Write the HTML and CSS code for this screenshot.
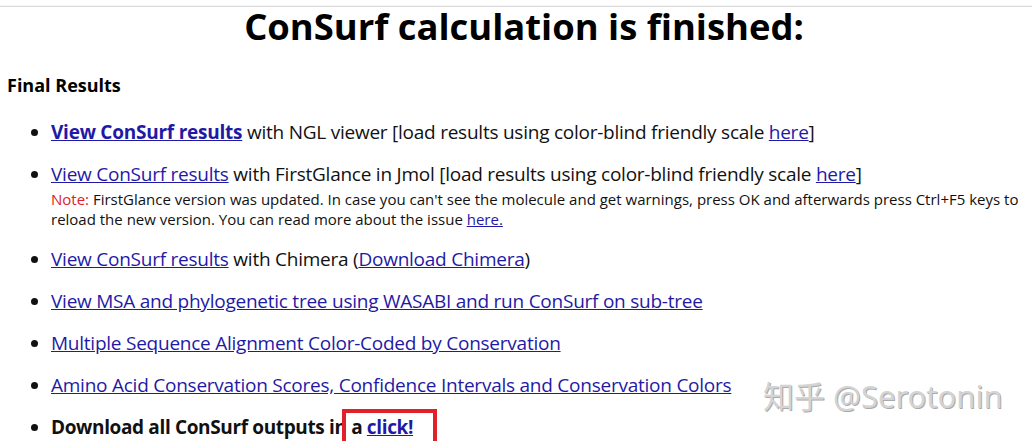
FILE: index.html
```html
<!DOCTYPE html>
<html>
<head>
<meta charset="utf-8">
<link rel="stylesheet" href="styles.css">
</head>
<body>
<div class="topline"></div>
<h1 class="title">ConSurf calculation is finished:</h1>
<h4 class="section">Final Results</h4>
<ul class="results">
  <li><a href="#" class="strong-link">View ConSurf results</a> with NGL viewer [load results using color-blind friendly scale <a href="#">here</a>]</li>
  <li><a href="#">View ConSurf results</a> with FirstGlance in Jmol [load results using color-blind friendly scale <a href="#">here</a>]
    <p class="note"><span class="red">Note:</span> FirstGlance version was updated. In case you can't see the molecule and get warnings, press OK and afterwards press Ctrl+F5 keys to reload the new version. You can read more about the issue <a href="#">here.</a></p>
  </li>
  <li><a href="#">View ConSurf results</a> with Chimera (<a href="#">Download Chimera</a>)</li>
  <li><a href="#">View MSA and phylogenetic tree using WASABI and run ConSurf on sub-tree</a></li>
  <li><a href="#">Multiple Sequence Alignment Color-Coded by Conservation</a></li>
  <li><a href="#">Amino Acid Conservation Scores, Confidence Intervals and Conservation Colors</a></li>
  <li class="bold">Download all ConSurf outputs in <span class="boxed">a <a href="#">click!</a></span></li>
</ul>
<div class="watermark">知乎 @Serotonin</div>
</body>
</html>
```
FILE: styles.css
```css
html, body {
  margin: 0;
  padding: 0;
  background: #fff;
  overflow: hidden;
  height: 441px;
}
body {
  font-family: "Open Sans", "Noto Sans", sans-serif;
  color: #111;
  position: relative;
}
.topline {
  margin-top: 5px;
  border-top: 1px solid #f4f4f4;
  border-bottom: 1px solid #dcdcdc;
}
.title {
  margin: 0;
  padding-left: 16px;
  text-align: center;
  font-size: 36.4px;
  font-weight: 700;
  line-height: 38px;
  color: #000;
}
.section {
  margin: 28px 0 0 7px;
  font-size: 18px;
  font-weight: 700;
  line-height: 24px;
  color: #000;
}
.results {
  margin: 22px 0 0 0;
  padding-left: 51px;
  font-size: 19px;
  line-height: 26px;
  letter-spacing: -0.24px;
}
.results li {
  margin-bottom: 16px;
}
a {
  color: #1f1aa6;
  text-decoration: underline;
}
.strong-link {
  font-weight: 700;
}
.note {
  margin: 2px 0 0 0;
  padding: 0 8px 1px 0;
  font-size: 15px;
  line-height: 20px;
  letter-spacing: 0;
}
.red {
  color: #e0202a;
}
.bold {
  font-weight: 700;
}
.results li.bold {
  letter-spacing: -0.36px;
}
.boxed {
  position: relative;
}
.boxed::after {
  content: "";
  position: absolute;
  left: -9px;
  top: -5px;
  width: 87px;
  height: 40px;
  border: 4px solid #e0202a;
}
.watermark {
  position: absolute;
  left: 763px;
  top: 372px;
  font-size: 31px;
  color: #d4d4d4;
  text-shadow: 1px 1px 0 #aaa;
  font-family: "Noto Sans", "Noto Sans CJK SC", sans-serif;
}
```
